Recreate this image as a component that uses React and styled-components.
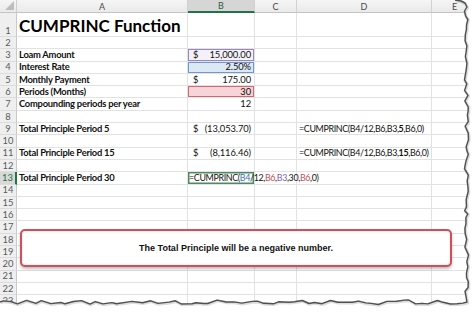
import React from "react";
import styled, { createGlobalStyle, css } from "styled-components";

const GlobalStyle = createGlobalStyle`
  html, body { margin: 0; padding: 0; background: #fff; }
  body { font-family: Lato, "Liberation Sans", sans-serif; }
`;

const GREEN = "#217346";

const COLS = ["A", "B", "C", "D", "E"];

const TONES = {
  purple: { bg: "#f4f1f9", line: "#9a86c2" },
  blue: { bg: "#dde8f5", line: "#7098cf" },
  red: { bg: "#f6d4d7", line: "#cf6a73" },
};

const REF = {
  B4: "#4170b8",
  B6: "#c2505a",
  B3: "#7d63a9",
};

const formula = (n, bold) => [
  { t: "=CUMPRINC(B4/12,B6,B3," },
  { t: n, bold },
  { t: ",B6,0)" },
];

const editing = [
  { t: "=CUMPRINC(" },
  { t: "B4", color: REF.B4 },
  { t: "/12," },
  { t: "B6", color: REF.B6 },
  { t: "," },
  { t: "B3", color: REF.B3 },
  { t: ",30," },
  { t: "B6", color: REF.B6 },
  { t: ",0)" },
];

const ROWS = [
  { n: 1, title: "CUMPRINC Function" },
  { n: 2 },
  { n: 3, a: "Loam Amount", b: { cur: "$", val: "15,000.00", tone: "purple" } },
  { n: 4, a: "Interest Rate", b: { val: "2.50%", tone: "blue" } },
  { n: 5, a: "Monthly Payment", b: { cur: "$", val: "175.00" } },
  { n: 6, a: "Periods (Months)", b: { val: "30", tone: "red" } },
  { n: 7, a: "Compounding periods per year", b: { val: "12" } },
  { n: 8 },
  { n: 9, a: "Total Principle Period 5", b: { cur: "$", val: "(13,053.70)" }, d: formula("5", true) },
  { n: 10 },
  { n: 11, a: "Total Principle Period 15", b: { cur: "$", val: "(8,116.46)" }, d: formula("15", true) },
  { n: 12 },
  { n: 13, a: "Total Principle Period 30", edit: editing, active: true },
  ...Array.from({ length: 10 }, (_, i) => ({ n: 14 + i })),
];

// deterministic jitter for the torn paper edge
const makeRand = (seed) => {
  let s = seed;
  return () => {
    s = (s * 16807) % 2147483647;
    return (s - 1) / 2147483646;
  };
};

const tornEdge = () => {
  const r = makeRand(11);
  const edge = [[455, 0], [461, 1], [465, 3], [467, 7]];
  for (let y = 11; y < 298; y += 3 + r() * 5) edge.push([464.5 + r() * 4, y]);
  edge.push([467, 302]);
  for (let x = 463; x > 0; x -= 4 + r() * 7) edge.push([x, 300 + r() * 4.5]);
  edge.push([0, 302]);
  const line = "M" + edge.map((p) => p.map((v) => v.toFixed(1)).join(" ")).join(" L");
  return { line, cut: `M0 0 H474 V312 H0 Z M0 0 L${line.slice(1)} Z` };
};

const Formula = ({ parts }) =>
  parts.map((p, i) => (
    <Part key={i} $bold={p.bold} $color={p.color}>
      {p.t}
    </Part>
  ));

const App = () => {
  const edge = tornEdge();
  return (
    <>
      <GlobalStyle />
      <Frame>
        <Sheet>
          <Corner />
          {COLS.map((c) => (
            <ColHead key={c} $selected={c === "B"}>
              {c}
            </ColHead>
          ))}
          <ColHead />
          {ROWS.map((row) => (
            <React.Fragment key={row.n}>
              <RowHead $active={row.active}>{row.n}</RowHead>
              <Cell $bold>{row.title ? <Title>{row.title}</Title> : row.a}</Cell>
              {row.edit ? (
                <ActiveCell>
                  <Formula parts={row.edit} />
                </ActiveCell>
              ) : (
                <NumCell $tone={row.b && row.b.tone}>
                  {row.b && (
                    <>
                      <span>{row.b.cur}</span>
                      <span>{row.b.val}</span>
                    </>
                  )}
                </NumCell>
              )}
              <Cell />
              <Cell>{row.d && <Formula parts={row.d} />}</Cell>
              <Cell />
              <Cell />
            </React.Fragment>
          ))}
        </Sheet>

        <Callout>The Total Principle will be a negative number.</Callout>

        <Tear viewBox="0 0 474 312">
          <path d={edge.cut} fill="#fff" fillRule="evenodd" />
          <path d={edge.line} fill="none" stroke="#9a9a9a" strokeWidth="3" opacity="0.35" transform="translate(0.6 0.8)" />
          <path d={edge.line} fill="none" stroke="#505050" strokeWidth="1.4" strokeLinejoin="round" />
        </Tear>
      </Frame>
    </>
  );
};

export default App;

const Frame = styled.div`
  position: relative;
  width: 474px;
  height: 312px;
  overflow: hidden;
  background: #fff;
`;

const Sheet = styled.div`
  display: grid;
  grid-template-columns: 17px 171px 67px 42px 135px 46px 1fr;
  grid-template-rows: 13px 24px repeat(22, 12.3px);
  font-size: 9.4px;
  color: #111;
`;

const headBg = css`
  background: linear-gradient(#f5f5f5, #eaeaea);
`;

const Corner = styled.div`
  ${headBg};
  position: relative;
  box-sizing: border-box;
  border-right: 1px solid #cfcfcf;
  border-bottom: 1px solid #c4c4c4;

  &::after {
    content: "";
    position: absolute;
    right: 2px;
    bottom: 2px;
    border-left: 9px solid transparent;
    border-bottom: 9px solid #bdbdbd;
  }
`;

const ColHead = styled.div`
  ${headBg};
  box-sizing: border-box;
  display: flex;
  align-items: center;
  justify-content: center;
  border-right: 1px solid #d2d2d2;
  border-bottom: 1px solid #c4c4c4;
  font-size: 9px;
  color: #4a4a4a;

  ${(p) =>
    p.$selected &&
    css`
      background: #d6d6d6;
      border-bottom: 2px solid ${GREEN};
      color: #2f5a3f;
    `}
`;

const RowHead = styled.div`
  box-sizing: border-box;
  display: flex;
  align-items: flex-end;
  justify-content: center;
  padding-bottom: 0.5px;
  background: #efefef;
  border-right: 1px solid #c9c9c9;
  border-bottom: 1px solid #dcdcdc;
  font-size: 9.4px;
  color: #5a5a5a;

  ${(p) =>
    p.$active &&
    css`
      background: #d8d8d8;
      color: ${GREEN};
      border-right: 2px solid ${GREEN};
    `}
`;

const Cell = styled.div`
  box-sizing: border-box;
  display: flex;
  align-items: flex-end;
  min-width: 0;
  padding: 0 2px 0.5px;
  border-right: 1px solid #e2e2e2;
  border-bottom: 1px solid #e2e2e2;
  white-space: nowrap;
  font-weight: ${(p) => (p.$bold ? 700 : 400)};
  font-size: ${(p) => (p.$bold ? "9.4px" : "8.9px")};
  letter-spacing: ${(p) => (p.$bold ? "-0.25px" : "-0.35px")};
`;

const NumCell = styled(Cell)`
  justify-content: space-between;
  padding: 0 3px 0.5px 5px;
  font-size: 9.4px;
  letter-spacing: -0.1px;

  ${(p) =>
    p.$tone &&
    css`
      background: ${TONES[p.$tone].bg};
      box-shadow: inset 0 0 0 1px ${TONES[p.$tone].line};
    `}
`;

const ActiveCell = styled(Cell)`
  position: relative;
  z-index: 2;
  overflow: visible;
  padding-left: 1px;
  box-shadow: inset 0 0 0 1.5px #4f8a63;
`;

const Title = styled.span`
  font-size: 17px;
  letter-spacing: 0;
  line-height: 1;
  padding: 0 0 2px 0;
  color: #000;
`;

const Part = styled.span`
  font-weight: ${(p) => (p.$bold ? 700 : 400)};
  color: ${(p) => p.$color || "inherit"};
`;

const Callout = styled.div`
  position: absolute;
  left: 20px;
  top: 229px;
  width: 432px;
  height: 38px;
  box-sizing: border-box;
  display: flex;
  align-items: center;
  justify-content: center;
  background: #fff;
  border: 2px solid #c9535d;
  border-radius: 5px;
  box-shadow: 0 2px 3px rgba(0, 0, 0, 0.25), inset 0 0 2px rgba(201, 83, 93, 0.35);
  font-family: "Liberation Sans", Arial, sans-serif;
  font-weight: 700;
  font-size: 9px;
  color: #111;
`;

const Tear = styled.svg`
  position: absolute;
  inset: 0;
  width: 474px;
  height: 312px;
  pointer-events: none;
`;
